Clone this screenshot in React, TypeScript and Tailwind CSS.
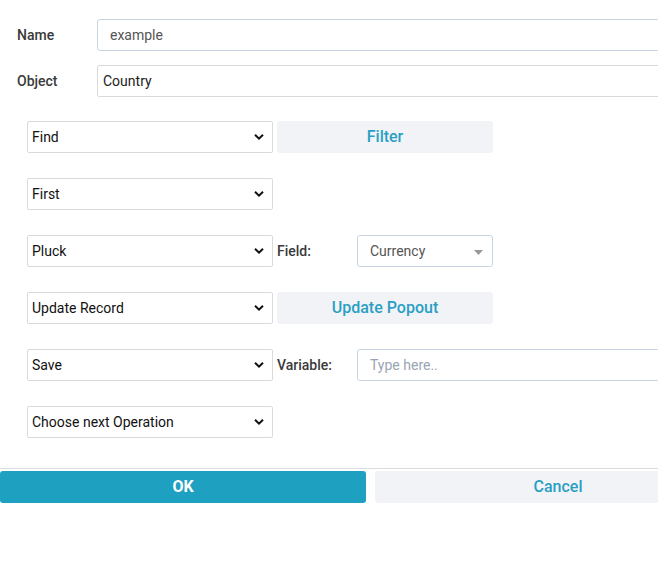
import { useState } from "react";

const font = { fontFamily: "Roboto, 'Liberation Sans', sans-serif" };

function Chevron() {
  return (
    <svg className="pointer-events-none absolute right-[9px] top-1/2 -translate-y-1/2" width="10" height="7" viewBox="0 0 10 7">
      <path d="M1 1.2 5 5.2 9 1.2" fill="none" stroke="#111" strokeWidth="2" />
    </svg>
  );
}

function OpSelect({ value }: { value: string }) {
  return (
    <div className="relative h-8 w-[246px] shrink-0">
      <select
        defaultValue={value}
        className="h-8 w-full appearance-none rounded-[2px] border border-[#dadada] bg-white pl-[4px] text-[14px] text-[#111] outline-none"
      >
        <option>{value}</option>
      </select>
      <Chevron />
    </div>
  );
}

export default function App() {
  const [name, setName] = useState("example");
  const [object, setObject] = useState("Country");

  return (
    <div className="h-[579px] w-[658px] overflow-hidden bg-white" style={font}>
      <div className="flex flex-col gap-[14px] pt-[19px]">
        <div className="flex items-center">
          <label className="w-[97px] shrink-0 pl-[17px] text-[14px] font-medium text-[#3a3a3a]">Name</label>
          <input
            className="h-8 w-[620px] shrink-0 rounded-[3px] border border-[#c9d5e2] px-[12px] text-[14px] text-[#555] outline-none"
            value={name}
            onChange={(e) => setName(e.target.value)}
          />
        </div>
        <div className="flex items-center">
          <label className="w-[97px] shrink-0 pl-[17px] text-[14px] font-medium text-[#3a3a3a]">Object</label>
          <input
            className="h-8 w-[620px] shrink-0 rounded-[2px] border border-[#dadada] px-[5px] text-[14px] text-[#222] outline-none"
            value={object}
            onChange={(e) => setObject(e.target.value)}
          />
        </div>
      </div>

      <div className="mt-[24px] flex flex-col gap-[25px] pl-[27px]">
        <div className="flex items-center gap-[4px]">
          <OpSelect value="Find" />
          <button className="h-8 w-[216px] rounded-[3px] bg-[#f2f3f7] text-[16px] font-medium text-[#2a9fc4]">Filter</button>
        </div>
        <div className="flex items-center">
          <OpSelect value="First" />
        </div>
        <div className="flex items-center gap-[4px]">
          <OpSelect value="Pluck" />
          <span className="w-[76px] shrink-0 text-[14px] font-medium text-[#3a3a3a]">Field:</span>
          <div className="relative h-8 w-[136px] shrink-0 rounded-[3px] border border-[#c9d5e2] bg-white">
            <span className="absolute left-[12px] top-1/2 -translate-y-1/2 text-[14px] text-[#555]">Currency</span>
            <svg className="absolute right-[9px] top-[14px]" width="9" height="5" viewBox="0 0 9 5">
              <path d="M0 0h9L4.5 5z" fill="#999" />
            </svg>
          </div>
        </div>
        <div className="flex items-center gap-[4px]">
          <OpSelect value="Update Record" />
          <button className="h-8 w-[216px] rounded-[3px] bg-[#f2f3f7] text-[16px] font-medium text-[#2a9fc4]">Update Popout</button>
        </div>
        <div className="flex items-center gap-[4px]">
          <OpSelect value="Save" />
          <span className="w-[76px] shrink-0 text-[14px] font-medium text-[#3a3a3a]">Variable:</span>
          <input
            className="h-8 w-[360px] shrink-0 rounded-[3px] border border-[#c9d5e2] px-[12px] text-[14px] text-[#555] outline-none placeholder:text-[#9aa5b3]"
            placeholder="Type here.."
          />
        </div>
        <div className="flex items-center">
          <OpSelect value="Choose next Operation" />
        </div>
      </div>

      <div className="mt-[30px] border-t border-[#dcdcdc] pt-[2px]">
        <div className="flex gap-[9px]">
          <button className="h-8 w-[366px] shrink-0 rounded-[3px] bg-[#1ea1c1] text-[16px] font-bold text-white">OK</button>
          <button className="h-8 w-[366px] shrink-0 rounded-[3px] bg-[#f2f3f7] text-[16px] font-medium text-[#2a9fc4]">Cancel</button>
        </div>
      </div>
    </div>
  );
}
